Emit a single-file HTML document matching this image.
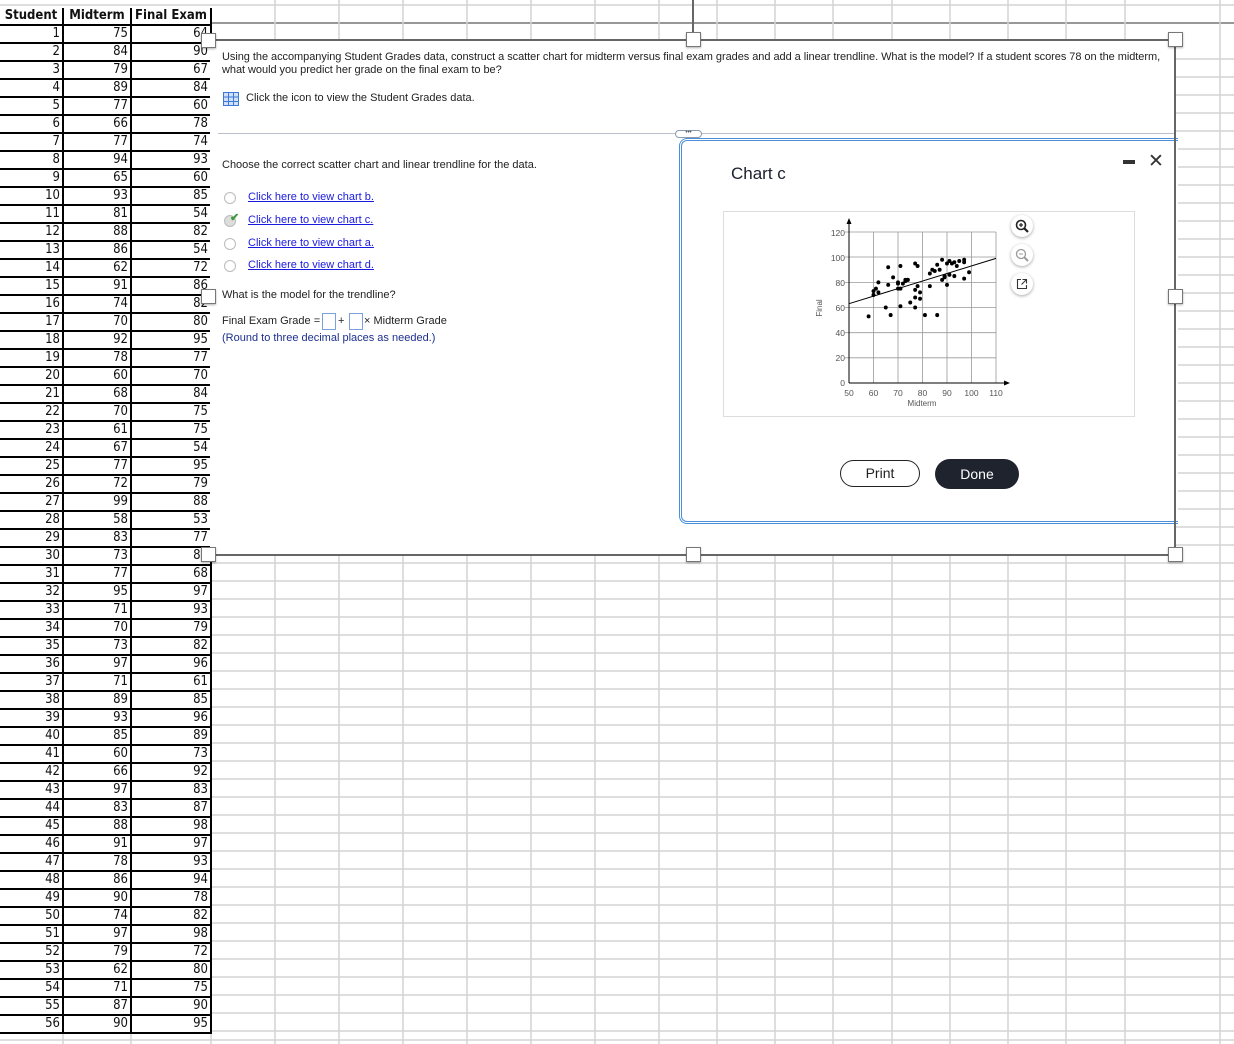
<!DOCTYPE html>
<html><head><meta charset="utf-8"><style>
body{margin:0;width:1234px;height:1044px;position:relative;overflow:hidden;background:#fff;font-family:"Liberation Sans",Arial,sans-serif}
.abs{position:absolute}
table{position:absolute;left:0;top:8px;border-collapse:collapse;table-layout:fixed;width:211px;font-family:"DejaVu Sans Condensed","Liberation Sans",sans-serif;font-size:13px}
td{height:16px;padding:0 2px 0 0;border-bottom:2px solid #000;border-right:2px solid #000;text-align:right;line-height:16px;color:#111;overflow:hidden;white-space:nowrap}
tr.h td{text-align:center;font-weight:bold;border-bottom:2px solid #000;padding:0}
.q{font-size:11px;color:#222}
a{color:#1a1adf}
.hd{position:absolute;width:13px;height:13px;background:#fff;border:1px solid #777;box-shadow:0 1px 2px rgba(0,0,0,.3)}
.zb{position:absolute;width:22px;height:22px;border-radius:50%;background:#fff;box-shadow:0 1px 3px rgba(0,0,0,.35)}
</style></head><body>
<svg class="abs" style="left:0;top:0" width="1234" height="1044">
<g stroke="#d4d4d4" stroke-width="1.5">
<line x1="0" y1="5" x2="1234" y2="5"/>
<line x1="63" y1="1031" x2="63" y2="1044"/><line x1="131" y1="1031" x2="131" y2="1044"/><line x1="211" y1="1031" x2="211" y2="1044"/>
<line x1="0" y1="1040" x2="1234" y2="1040"/>
</g>
<line x1="211" y1="23" x2="1234" y2="23" stroke="#777" stroke-width="1.5"/>
<g stroke="#d4d4d4" stroke-width="1.5">
<line x1="275" y1="0" x2="275" y2="1044"/><line x1="339" y1="0" x2="339" y2="1044"/><line x1="403" y1="0" x2="403" y2="1044"/><line x1="467" y1="0" x2="467" y2="1044"/><line x1="531" y1="0" x2="531" y2="1044"/><line x1="595" y1="0" x2="595" y2="1044"/><line x1="659" y1="0" x2="659" y2="1044"/><line x1="717" y1="0" x2="717" y2="1044"/><line x1="775" y1="0" x2="775" y2="1044"/><line x1="833" y1="0" x2="833" y2="1044"/><line x1="892" y1="0" x2="892" y2="1044"/><line x1="950" y1="0" x2="950" y2="1044"/><line x1="1008" y1="0" x2="1008" y2="1044"/><line x1="1066" y1="0" x2="1066" y2="1044"/><line x1="1125" y1="0" x2="1125" y2="1044"/><line x1="1220" y1="0" x2="1220" y2="1044"/>
</g>
<g stroke="#d4d4d4" stroke-width="1.5">
<line x1="1175" y1="59" x2="1234" y2="59"/><line x1="1175" y1="77" x2="1234" y2="77"/><line x1="1175" y1="95" x2="1234" y2="95"/><line x1="1175" y1="113" x2="1234" y2="113"/><line x1="1175" y1="131" x2="1234" y2="131"/><line x1="1175" y1="149" x2="1234" y2="149"/><line x1="1175" y1="167" x2="1234" y2="167"/><line x1="1175" y1="185" x2="1234" y2="185"/><line x1="1175" y1="203" x2="1234" y2="203"/><line x1="1175" y1="221" x2="1234" y2="221"/><line x1="1175" y1="239" x2="1234" y2="239"/><line x1="1175" y1="257" x2="1234" y2="257"/><line x1="1175" y1="275" x2="1234" y2="275"/><line x1="1175" y1="293" x2="1234" y2="293"/><line x1="1175" y1="311" x2="1234" y2="311"/><line x1="1175" y1="329" x2="1234" y2="329"/><line x1="1175" y1="347" x2="1234" y2="347"/><line x1="1175" y1="365" x2="1234" y2="365"/><line x1="1175" y1="383" x2="1234" y2="383"/><line x1="1175" y1="401" x2="1234" y2="401"/><line x1="1175" y1="419" x2="1234" y2="419"/><line x1="1175" y1="437" x2="1234" y2="437"/><line x1="1175" y1="455" x2="1234" y2="455"/><line x1="1175" y1="473" x2="1234" y2="473"/><line x1="1175" y1="491" x2="1234" y2="491"/><line x1="1175" y1="509" x2="1234" y2="509"/><line x1="1175" y1="527" x2="1234" y2="527"/><line x1="1175" y1="545" x2="1234" y2="545"/>
<line x1="211" y1="563" x2="1234" y2="563"/><line x1="211" y1="581" x2="1234" y2="581"/><line x1="211" y1="599" x2="1234" y2="599"/><line x1="211" y1="617" x2="1234" y2="617"/><line x1="211" y1="635" x2="1234" y2="635"/><line x1="211" y1="653" x2="1234" y2="653"/><line x1="211" y1="671" x2="1234" y2="671"/><line x1="211" y1="689" x2="1234" y2="689"/><line x1="211" y1="707" x2="1234" y2="707"/><line x1="211" y1="725" x2="1234" y2="725"/><line x1="211" y1="743" x2="1234" y2="743"/><line x1="211" y1="761" x2="1234" y2="761"/><line x1="211" y1="779" x2="1234" y2="779"/><line x1="211" y1="797" x2="1234" y2="797"/><line x1="211" y1="815" x2="1234" y2="815"/><line x1="211" y1="833" x2="1234" y2="833"/><line x1="211" y1="851" x2="1234" y2="851"/><line x1="211" y1="869" x2="1234" y2="869"/><line x1="211" y1="887" x2="1234" y2="887"/><line x1="211" y1="905" x2="1234" y2="905"/><line x1="211" y1="923" x2="1234" y2="923"/><line x1="211" y1="941" x2="1234" y2="941"/><line x1="211" y1="959" x2="1234" y2="959"/><line x1="211" y1="977" x2="1234" y2="977"/><line x1="211" y1="995" x2="1234" y2="995"/><line x1="211" y1="1013" x2="1234" y2="1013"/><line x1="211" y1="1031" x2="1234" y2="1031"/>
</g>
</svg>

<table>
<colgroup><col style="width:63px"><col style="width:68px"><col style="width:80px"></colgroup>
<tr class="h"><td>Student</td><td>Midterm</td><td>Final Exam</td></tr>
<tr><td>1</td><td>75</td><td>64</td></tr><tr><td>2</td><td>84</td><td>90</td></tr><tr><td>3</td><td>79</td><td>67</td></tr><tr><td>4</td><td>89</td><td>84</td></tr><tr><td>5</td><td>77</td><td>60</td></tr><tr><td>6</td><td>66</td><td>78</td></tr><tr><td>7</td><td>77</td><td>74</td></tr><tr><td>8</td><td>94</td><td>93</td></tr><tr><td>9</td><td>65</td><td>60</td></tr><tr><td>10</td><td>93</td><td>85</td></tr><tr><td>11</td><td>81</td><td>54</td></tr><tr><td>12</td><td>88</td><td>82</td></tr><tr><td>13</td><td>86</td><td>54</td></tr><tr><td>14</td><td>62</td><td>72</td></tr><tr><td>15</td><td>91</td><td>86</td></tr><tr><td>16</td><td>74</td><td>82</td></tr><tr><td>17</td><td>70</td><td>80</td></tr><tr><td>18</td><td>92</td><td>95</td></tr><tr><td>19</td><td>78</td><td>77</td></tr><tr><td>20</td><td>60</td><td>70</td></tr><tr><td>21</td><td>68</td><td>84</td></tr><tr><td>22</td><td>70</td><td>75</td></tr><tr><td>23</td><td>61</td><td>75</td></tr><tr><td>24</td><td>67</td><td>54</td></tr><tr><td>25</td><td>77</td><td>95</td></tr><tr><td>26</td><td>72</td><td>79</td></tr><tr><td>27</td><td>99</td><td>88</td></tr><tr><td>28</td><td>58</td><td>53</td></tr><tr><td>29</td><td>83</td><td>77</td></tr><tr><td>30</td><td>73</td><td>81</td></tr><tr><td>31</td><td>77</td><td>68</td></tr><tr><td>32</td><td>95</td><td>97</td></tr><tr><td>33</td><td>71</td><td>93</td></tr><tr><td>34</td><td>70</td><td>79</td></tr><tr><td>35</td><td>73</td><td>82</td></tr><tr><td>36</td><td>97</td><td>96</td></tr><tr><td>37</td><td>71</td><td>61</td></tr><tr><td>38</td><td>89</td><td>85</td></tr><tr><td>39</td><td>93</td><td>96</td></tr><tr><td>40</td><td>85</td><td>89</td></tr><tr><td>41</td><td>60</td><td>73</td></tr><tr><td>42</td><td>66</td><td>92</td></tr><tr><td>43</td><td>97</td><td>83</td></tr><tr><td>44</td><td>83</td><td>87</td></tr><tr><td>45</td><td>88</td><td>98</td></tr><tr><td>46</td><td>91</td><td>97</td></tr><tr><td>47</td><td>78</td><td>93</td></tr><tr><td>48</td><td>86</td><td>94</td></tr><tr><td>49</td><td>90</td><td>78</td></tr><tr><td>50</td><td>74</td><td>82</td></tr><tr><td>51</td><td>97</td><td>98</td></tr><tr><td>52</td><td>79</td><td>72</td></tr><tr><td>53</td><td>62</td><td>80</td></tr><tr><td>54</td><td>71</td><td>75</td></tr><tr><td>55</td><td>87</td><td>90</td></tr><tr><td>56</td><td>90</td><td>95</td></tr>
</table>

<div class="abs" style="left:210px;top:40px;width:964px;height:514px;background:#fff"></div>
<div class="abs" style="left:692px;top:0;width:2px;height:40px;background:#666"></div>
<div class="abs q" style="left:222px;top:51px;width:950px;line-height:13px;white-space:nowrap;letter-spacing:-0.05px">Using the accompanying Student Grades data, construct a scatter chart for midterm versus final exam grades and add a linear trendline. What is the model? If a student scores 78 on the midterm,<br>what would you predict her grade on the final exam to be?</div>
<svg class="abs" style="left:223px;top:92px" width="17" height="15"><rect x="0.5" y="0.5" width="15" height="13" fill="#cfe0f8" stroke="#3b78d8"/><g stroke="#3b78d8"><line x1="0" y1="5" x2="16" y2="5"/><line x1="0" y1="9.5" x2="16" y2="9.5"/><line x1="5.5" y1="0" x2="5.5" y2="14"/><line x1="10.5" y1="0" x2="10.5" y2="14"/></g></svg>
<div class="abs q" style="left:246px;top:92px">Click the icon to view the Student Grades data.</div>
<div class="abs" style="left:218px;top:133px;width:957px;height:1px;background:#b8c0cc"></div>
<div class="abs" style="left:675px;top:130px;width:25px;height:6px;border:1px solid #8a9ab0;border-radius:4px;background:#fff;font-size:6px;line-height:4px;text-align:center;color:#555">•••</div>
<div class="abs q" style="left:222px;top:159px">Choose the correct scatter chart and linear trendline for the data.</div>
<div class="abs" style="left:224px;top:192px;width:10px;height:10px;border:1px solid #bbb;border-radius:50%"></div>
<div class="abs" style="left:224px;top:215px;width:10px;height:10px;border:1px solid #bbb;border-radius:50%;background:#ddd"></div>
<div class="abs" style="left:230px;top:211px;color:#3a9a3a;font-size:11px;font-weight:bold">✔</div>
<div class="abs" style="left:224px;top:238px;width:10px;height:10px;border:1px solid #bbb;border-radius:50%"></div>
<div class="abs" style="left:224px;top:260px;width:10px;height:10px;border:1px solid #bbb;border-radius:50%"></div>
<div class="abs q" style="left:248px;top:191px"><a href="#">Click here to view chart b.</a></div>
<div class="abs q" style="left:248px;top:214px"><a href="#">Click here to view chart c.</a></div>
<div class="abs q" style="left:248px;top:237px"><a href="#">Click here to view chart a.</a></div>
<div class="abs q" style="left:248px;top:259px"><a href="#">Click here to view chart d.</a></div>
<div class="abs q" style="left:222px;top:289px">What is the model for the trendline?</div>
<div class="abs q" style="left:222px;top:315px">Final Exam Grade =</div>
<div class="abs" style="left:322px;top:313px;width:12px;height:15px;border:1px solid #7aa0e0"></div>
<div class="abs q" style="left:338px;top:315px">+</div>
<div class="abs" style="left:349px;top:313px;width:12px;height:15px;border:1px solid #7aa0e0"></div>
<div class="abs q" style="left:364px;top:315px">× Midterm Grade</div>
<div class="abs q" style="left:222px;top:332px;color:#1c2f8f">(Round to three decimal places as needed.)</div>

<div class="abs" style="left:679px;top:138px;width:496px;height:380px;border:3px double #4a8fd8;border-right:none;border-radius:8px 0 0 8px;background:#fff"></div>
<div class="abs" style="left:731px;top:164px;font-size:17px;color:#1a1f2e">Chart c</div>
<div class="abs" style="left:1123px;top:160px;width:12px;height:4px;background:#333"></div>
<div class="abs" style="left:1148px;top:150px;font-size:19px;color:#333">✕</div>
<div class="abs" style="left:723px;top:211px;width:410px;height:204px;border:1px solid #ddd"></div>
<svg class="abs" style="left:0;top:0" width="1234" height="1044">
<g stroke="#999" stroke-width="0.8">
<line x1="873.5" y1="232" x2="873.5" y2="383"/><line x1="898" y1="232" x2="898" y2="383"/><line x1="922.5" y1="232" x2="922.5" y2="383"/><line x1="947" y1="232" x2="947" y2="383"/><line x1="971.5" y1="232" x2="971.5" y2="383"/><line x1="996" y1="232" x2="996" y2="383"/>
<line x1="845" y1="232" x2="996" y2="232"/><line x1="845" y1="257" x2="996" y2="257"/><line x1="845" y1="282.4" x2="996" y2="282.4"/><line x1="845" y1="307.5" x2="996" y2="307.5"/><line x1="845" y1="332.7" x2="996" y2="332.7"/><line x1="845" y1="357.8" x2="996" y2="357.8"/>
</g>
<g stroke="#000" stroke-width="1"><line x1="849" y1="383" x2="849" y2="222"/><line x1="849" y1="383" x2="1006" y2="383"/></g>
<polygon points="849,218 846.5,224 851.5,224" fill="#000"/><polygon points="1010,383 1004,380.5 1004,385.5" fill="#000"/>
<line x1="849" y1="303.7" x2="996" y2="258.4" stroke="#000" stroke-width="1"/>
<g font-size="8.5" fill="#555" font-family="Liberation Sans,sans-serif" text-anchor="end">
<text x="845" y="236">120</text><text x="845" y="261">100</text><text x="845" y="286">80</text><text x="845" y="311">60</text><text x="845" y="336">40</text><text x="845" y="361">20</text><text x="845" y="386">0</text>
</g>
<g font-size="8.5" fill="#555" font-family="Liberation Sans,sans-serif" text-anchor="middle">
<text x="849" y="396">50</text><text x="873.5" y="396">60</text><text x="898" y="396">70</text><text x="922.5" y="396">80</text><text x="947" y="396">90</text><text x="971.5" y="396">100</text><text x="996" y="396">110</text>
<text x="922" y="406" font-size="8">Midterm</text>
<text x="0" y="0" font-size="8" transform="translate(822,308) rotate(-90)">Final</text>
</g>
<g transform="translate(849,383) scale(2.45,-1.258)" fill="#000">
<ellipse cx="25" cy="64" rx="0.8" ry="1.6"/><ellipse cx="34" cy="90" rx="0.8" ry="1.6"/><ellipse cx="29" cy="67" rx="0.8" ry="1.6"/><ellipse cx="39" cy="84" rx="0.8" ry="1.6"/><ellipse cx="27" cy="60" rx="0.8" ry="1.6"/><ellipse cx="16" cy="78" rx="0.8" ry="1.6"/><ellipse cx="27" cy="74" rx="0.8" ry="1.6"/><ellipse cx="44" cy="93" rx="0.8" ry="1.6"/><ellipse cx="15" cy="60" rx="0.8" ry="1.6"/><ellipse cx="43" cy="85" rx="0.8" ry="1.6"/><ellipse cx="31" cy="54" rx="0.8" ry="1.6"/><ellipse cx="38" cy="82" rx="0.8" ry="1.6"/><ellipse cx="36" cy="54" rx="0.8" ry="1.6"/><ellipse cx="12" cy="72" rx="0.8" ry="1.6"/><ellipse cx="41" cy="86" rx="0.8" ry="1.6"/><ellipse cx="24" cy="82" rx="0.8" ry="1.6"/><ellipse cx="20" cy="80" rx="0.8" ry="1.6"/><ellipse cx="42" cy="95" rx="0.8" ry="1.6"/><ellipse cx="28" cy="77" rx="0.8" ry="1.6"/><ellipse cx="10" cy="70" rx="0.8" ry="1.6"/><ellipse cx="18" cy="84" rx="0.8" ry="1.6"/><ellipse cx="20" cy="75" rx="0.8" ry="1.6"/><ellipse cx="11" cy="75" rx="0.8" ry="1.6"/><ellipse cx="17" cy="54" rx="0.8" ry="1.6"/><ellipse cx="27" cy="95" rx="0.8" ry="1.6"/><ellipse cx="22" cy="79" rx="0.8" ry="1.6"/><ellipse cx="49" cy="88" rx="0.8" ry="1.6"/><ellipse cx="8" cy="53" rx="0.8" ry="1.6"/><ellipse cx="33" cy="77" rx="0.8" ry="1.6"/><ellipse cx="23" cy="81" rx="0.8" ry="1.6"/><ellipse cx="27" cy="68" rx="0.8" ry="1.6"/><ellipse cx="45" cy="97" rx="0.8" ry="1.6"/><ellipse cx="21" cy="93" rx="0.8" ry="1.6"/><ellipse cx="20" cy="79" rx="0.8" ry="1.6"/><ellipse cx="23" cy="82" rx="0.8" ry="1.6"/><ellipse cx="47" cy="96" rx="0.8" ry="1.6"/><ellipse cx="21" cy="61" rx="0.8" ry="1.6"/><ellipse cx="39" cy="85" rx="0.8" ry="1.6"/><ellipse cx="43" cy="96" rx="0.8" ry="1.6"/><ellipse cx="35" cy="89" rx="0.8" ry="1.6"/><ellipse cx="10" cy="73" rx="0.8" ry="1.6"/><ellipse cx="16" cy="92" rx="0.8" ry="1.6"/><ellipse cx="47" cy="83" rx="0.8" ry="1.6"/><ellipse cx="33" cy="87" rx="0.8" ry="1.6"/><ellipse cx="38" cy="98" rx="0.8" ry="1.6"/><ellipse cx="41" cy="97" rx="0.8" ry="1.6"/><ellipse cx="28" cy="93" rx="0.8" ry="1.6"/><ellipse cx="36" cy="94" rx="0.8" ry="1.6"/><ellipse cx="40" cy="78" rx="0.8" ry="1.6"/><ellipse cx="24" cy="82" rx="0.8" ry="1.6"/><ellipse cx="47" cy="98" rx="0.8" ry="1.6"/><ellipse cx="29" cy="72" rx="0.8" ry="1.6"/><ellipse cx="12" cy="80" rx="0.8" ry="1.6"/><ellipse cx="21" cy="75" rx="0.8" ry="1.6"/><ellipse cx="37" cy="90" rx="0.8" ry="1.6"/><ellipse cx="40" cy="95" rx="0.8" ry="1.6"/>
</g>
</svg>
<div class="zb" style="left:1011px;top:215px"></div>
<div class="zb" style="left:1011px;top:244px"></div>
<div class="zb" style="left:1011px;top:273px"></div>
<svg class="abs" style="left:1011px;top:215px" width="22" height="80">
<g fill="none" stroke="#222" stroke-width="1.6"><circle cx="10" cy="10" r="4.5"/><line x1="13.3" y1="13.3" x2="17" y2="17" stroke-width="2.2"/><line x1="8" y1="10" x2="12" y2="10" stroke-width="1.2"/><line x1="10" y1="8" x2="10" y2="12" stroke-width="1.2"/></g>
<g fill="none" stroke="#999" stroke-width="1.3" transform="translate(0,29)"><circle cx="10" cy="10" r="4.5"/><line x1="13.3" y1="13.3" x2="17" y2="17" stroke-width="2"/><line x1="8" y1="10" x2="12" y2="10" stroke-width="1"/></g>
<g fill="none" stroke="#333" stroke-width="1.1" transform="translate(0,58)"><path d="M10 6.5H6.5V15.5H15.5V12"/><path d="M11.5 6.5H15.5V10.5M15.5 6.5L10.5 11.5"/></g>
</svg>
<div class="abs" style="left:840px;top:460px;width:78px;height:25px;border:1.5px solid #222;border-radius:14px;text-align:center;line-height:25px;font-size:14px;color:#222">Print</div>
<div class="abs" style="left:935px;top:459px;width:84px;height:30px;background:#1f232d;border-radius:15px;text-align:center;line-height:30px;font-size:14px;color:#fff">Done</div>

<div class="abs" style="left:210px;top:39px;width:966px;height:2px;background:#666"></div>
<div class="abs" style="left:1174px;top:39px;width:2px;height:517px;background:#666"></div>
<div class="abs" style="left:210px;top:554px;width:966px;height:2px;background:#666"></div>

<div class="hd" style="left:201px;top:33px"></div>
<div class="hd" style="left:686px;top:32px"></div>
<div class="hd" style="left:1168px;top:32px"></div>
<div class="hd" style="left:201px;top:289px"></div>
<div class="hd" style="left:1168px;top:289px"></div>
<div class="hd" style="left:201px;top:547px"></div>
<div class="hd" style="left:686px;top:547px"></div>
<div class="hd" style="left:1168px;top:547px"></div>
</body></html>
